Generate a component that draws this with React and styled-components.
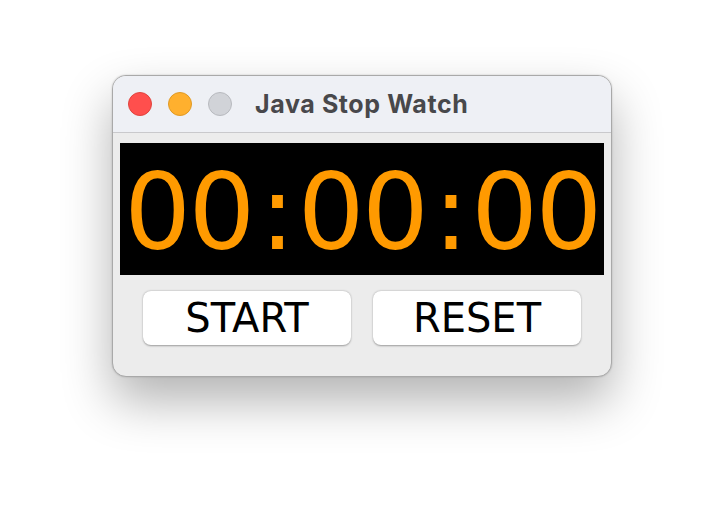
import React from 'react'
import styled, { createGlobalStyle } from 'styled-components'

const GlobalStyle = createGlobalStyle`
  html, body {
    margin: 0;
    padding: 0;
    background: #ffffff;
  }
`

const Page = styled.div`
  width: 724px;
  height: 524px;
  display: flex;
  justify-content: center;
  align-items: flex-start;
  padding-top: 75px;
  box-sizing: border-box;
`

const Window = styled.div`
  width: 500px;
  border-radius: 14px;
  border: 1px solid #a9a9a9;
  background: #ececec;
  overflow: hidden;
  box-sizing: border-box;
  box-shadow: 0 24px 50px rgba(0, 0, 0, 0.3), 0 0 2px rgba(0, 0, 0, 0.2);
`

const TitleBar = styled.div`
  height: 56px;
  background: #eef0f5;
  border-bottom: 1px solid #c9c9cc;
  display: flex;
  align-items: center;
  padding-left: 15px;
  gap: 23px;
`

const Lights = styled.div`
  display: flex;
  gap: 16px;
`

const Light = styled.span`
  width: 24px;
  height: 24px;
  border-radius: 50%;
  box-sizing: border-box;
  background: ${p => p.$fill};
  border: 1px solid ${p => p.$edge};
`

const Title = styled.div`
  font-family: Inter, "Liberation Sans", sans-serif;
  font-weight: bold;
  font-size: 25px;
  color: #48484b;
  letter-spacing: 0.6px;
`

const Body = styled.div`
  padding: 10px 7px 31px 7px;
  display: flex;
  flex-direction: column;
  gap: 16px;
`

const Display = styled.div`
  height: 132px;
  box-sizing: border-box;
  padding-top: 9px;
  background: #000;
  display: flex;
  align-items: center;
  justify-content: center;
  font-family: "DejaVu Sans", sans-serif;
  font-size: 105px;
  letter-spacing: -2.5px;
  color: #ff9a00;
  line-height: 1;
  white-space: pre;
`

const Colon = styled.span`
  margin: 0 5px 0 7px;
`

const Buttons = styled.div`
  display: flex;
  justify-content: center;
  gap: 22px;
`

const Button = styled.button`
  width: 208px;
  height: 54px;
  border: none;
  border-radius: 8px;
  background: #fff;
  box-shadow: 0 0.5px 2px rgba(0, 0, 0, 0.35);
  font-family: "DejaVu Sans", sans-serif;
  font-size: 40px;
  color: #000;
  padding: 0;
  display: flex;
  align-items: center;
  justify-content: center;
`

function Clock({ h, m, s }) {
  return (
    <Display>
      {h}<Colon>:</Colon>{m}<Colon>:</Colon>{s}
    </Display>
  )
}

export default function App() {
  return (
    <>
      <GlobalStyle />
      <Page>
        <Window>
          <TitleBar>
            <Lights>
              <Light $fill="#ff4f4d" $edge="#e0443e" />
              <Light $fill="#ffb02e" $edge="#e09a25" />
              <Light $fill="#d1d3d8" $edge="#b8babf" />
            </Lights>
            <Title>Java Stop Watch</Title>
          </TitleBar>
          <Body>
            <Clock h="00" m="00" s="00" />
            <Buttons>
              <Button>START</Button>
              <Button>RESET</Button>
            </Buttons>
          </Body>
        </Window>
      </Page>
    </>
  )
}
